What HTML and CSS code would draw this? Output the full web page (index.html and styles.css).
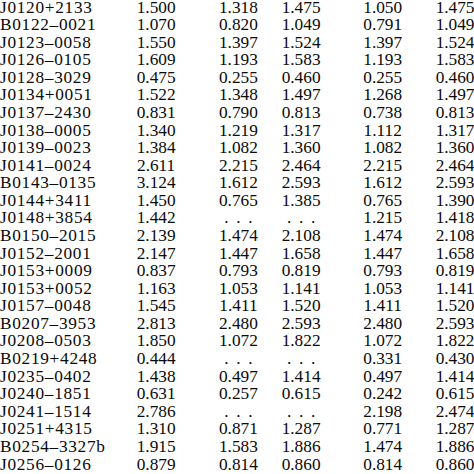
FILE: index.html
```html
<!DOCTYPE html>
<html>
<head>
<meta charset="utf-8">
<link rel="stylesheet" href="styles.css">
</head>
<body>
<div class="tbl">
<span class="n">J0120+2133</span><span class="c2">1.500</span><span class="c3">1.318</span><span class="c4">1.475</span><span class="c5">1.050</span><span class="c6">1.475</span>
<span class="n">B0122–0021</span><span class="c2">1.070</span><span class="c3">0.820</span><span class="c4">1.049</span><span class="c5">0.791</span><span class="c6">1.049</span>
<span class="n">J0123–0058</span><span class="c2">1.550</span><span class="c3">1.397</span><span class="c4">1.524</span><span class="c5">1.397</span><span class="c6">1.524</span>
<span class="n">J0126–0105</span><span class="c2">1.609</span><span class="c3">1.193</span><span class="c4">1.583</span><span class="c5">1.193</span><span class="c6">1.583</span>
<span class="n">J0128–3029</span><span class="c2">0.475</span><span class="c3">0.255</span><span class="c4">0.460</span><span class="c5">0.255</span><span class="c6">0.460</span>
<span class="n">J0134+0051</span><span class="c2">1.522</span><span class="c3">1.348</span><span class="c4">1.497</span><span class="c5">1.268</span><span class="c6">1.497</span>
<span class="n">J0137–2430</span><span class="c2">0.831</span><span class="c3">0.790</span><span class="c4">0.813</span><span class="c5">0.738</span><span class="c6">0.813</span>
<span class="n">J0138–0005</span><span class="c2">1.340</span><span class="c3">1.219</span><span class="c4">1.317</span><span class="c5">1.112</span><span class="c6">1.317</span>
<span class="n">J0139–0023</span><span class="c2">1.384</span><span class="c3">1.082</span><span class="c4">1.360</span><span class="c5">1.082</span><span class="c6">1.360</span>
<span class="n">J0141–0024</span><span class="c2">2.611</span><span class="c3">2.215</span><span class="c4">2.464</span><span class="c5">2.215</span><span class="c6">2.464</span>
<span class="n">B0143–0135</span><span class="c2">3.124</span><span class="c3">1.612</span><span class="c4">2.593</span><span class="c5">1.612</span><span class="c6">2.593</span>
<span class="n">J0144+3411</span><span class="c2">1.450</span><span class="c3">0.765</span><span class="c4">1.385</span><span class="c5">0.765</span><span class="c6">1.390</span>
<span class="n">J0148+3854</span><span class="c2">1.442</span><span class="c3 dots">. . .</span><span class="c4 dots">. . .</span><span class="c5">1.215</span><span class="c6">1.418</span>
<span class="n">B0150–2015</span><span class="c2">2.139</span><span class="c3">1.474</span><span class="c4">2.108</span><span class="c5">1.474</span><span class="c6">2.108</span>
<span class="n">J0152–2001</span><span class="c2">2.147</span><span class="c3">1.447</span><span class="c4">1.658</span><span class="c5">1.447</span><span class="c6">1.658</span>
<span class="n">J0153+0009</span><span class="c2">0.837</span><span class="c3">0.793</span><span class="c4">0.819</span><span class="c5">0.793</span><span class="c6">0.819</span>
<span class="n">J0153+0052</span><span class="c2">1.163</span><span class="c3">1.053</span><span class="c4">1.141</span><span class="c5">1.053</span><span class="c6">1.141</span>
<span class="n">J0157–0048</span><span class="c2">1.545</span><span class="c3">1.411</span><span class="c4">1.520</span><span class="c5">1.411</span><span class="c6">1.520</span>
<span class="n">B0207–3953</span><span class="c2">2.813</span><span class="c3">2.480</span><span class="c4">2.593</span><span class="c5">2.480</span><span class="c6">2.593</span>
<span class="n">J0208–0503</span><span class="c2">1.850</span><span class="c3">1.072</span><span class="c4">1.822</span><span class="c5">1.072</span><span class="c6">1.822</span>
<span class="n">B0219+4248</span><span class="c2">0.444</span><span class="c3 dots">. . .</span><span class="c4 dots">. . .</span><span class="c5">0.331</span><span class="c6">0.430</span>
<span class="n">J0235–0402</span><span class="c2">1.438</span><span class="c3">0.497</span><span class="c4">1.414</span><span class="c5">0.497</span><span class="c6">1.414</span>
<span class="n">J0240–1851</span><span class="c2">0.631</span><span class="c3">0.257</span><span class="c4">0.615</span><span class="c5">0.242</span><span class="c6">0.615</span>
<span class="n">J0241–1514</span><span class="c2">2.786</span><span class="c3 dots">. . .</span><span class="c4 dots">. . .</span><span class="c5">2.198</span><span class="c6">2.474</span>
<span class="n">J0251+4315</span><span class="c2">1.310</span><span class="c3">0.871</span><span class="c4">1.287</span><span class="c5">0.771</span><span class="c6">1.287</span>
<span class="n">B0254–3327b</span><span class="c2">1.915</span><span class="c3">1.583</span><span class="c4">1.886</span><span class="c5">1.474</span><span class="c6">1.886</span>
<span class="n">J0256–0126</span><span class="c2">0.879</span><span class="c3">0.814</span><span class="c4">0.860</span><span class="c5">0.814</span><span class="c6">0.860</span>
</div>
</body>
</html>
```
FILE: styles.css
```css
html, body {
  margin: 0;
  padding: 0;
  background: #ffffff;
  overflow: hidden;
}
.tbl {
  display: grid;
  grid-template-columns: 136.7px 38.9px 43.4px 38.9px 23.8px 38.9px 42.7px 38.9px 33.5px 38.9px;
  grid-auto-rows: 17.58px;
  margin-top: -1.5px;
  font-family: "Liberation Serif", "Times New Roman", serif;
  font-size: 17.3px;
  line-height: 17.58px;
  color: #0a0a0a;
  white-space: nowrap;
}
.tbl span {
  text-align: center;
}
.tbl .n {
  grid-column: 1;
  text-align: left;
  letter-spacing: 0.7px;
}
.c2 { grid-column: 2; }
.c3 { grid-column: 4; }
.c4 { grid-column: 6; }
.c5 { grid-column: 8; }
.c6 { grid-column: 10; }
.dots {
  word-spacing: 3.4px;
}
```
